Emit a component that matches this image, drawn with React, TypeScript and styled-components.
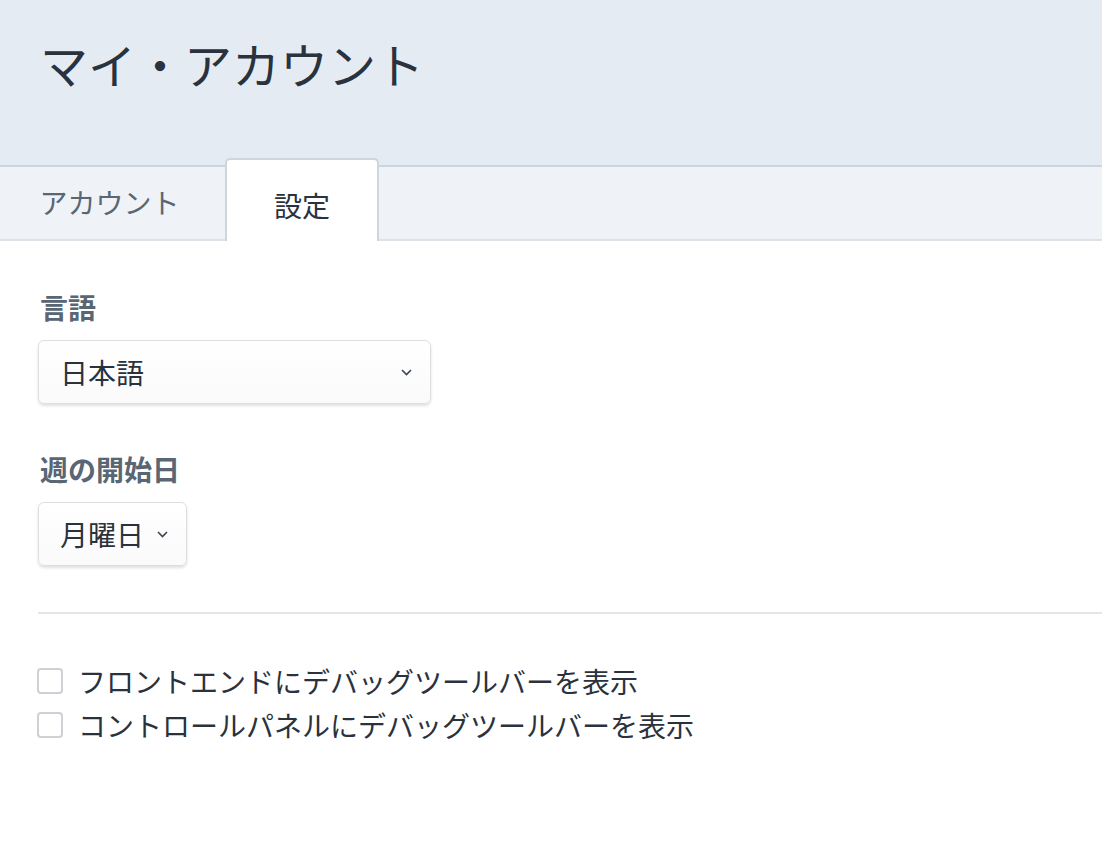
import React from "react";
import styled, { createGlobalStyle } from "styled-components";

const GlobalStyle = createGlobalStyle`
  html, body {
    margin: 0;
    padding: 0;
    background: #ffffff;
  }
  body {
    font-family: "Noto Sans", "Noto Sans CJK JP", sans-serif;
    color: #29323d;
  }
`;

// Page header with title
const Header = styled.header`
  height: 165px;
  box-sizing: border-box;
  background-color: #e4ebf3;
  padding: 30px 0 0 40px;
`;

const Title = styled.h1`
  margin: 0;
  font-size: 48px;
  line-height: 72px;
  font-weight: 400;
  color: #29323d;
`;

// Tab strip under the header
const TabBar = styled.nav`
  display: flex;
  align-items: flex-end;
  height: 76px;
  box-sizing: border-box;
  background-color: #eff3f7;
  border-top: 2px solid #cdd5dd;
  border-bottom: 2px solid #dde2e7;
`;

const Tab = styled.div<{ $active?: boolean; $width: number }>`
  display: flex;
  align-items: center;
  justify-content: center;
  box-sizing: border-box;
  width: ${(p) => p.$width}px;
  font-size: 28px;
  color: ${(p) => (p.$active ? "#29323d" : "#596673")};
  background-color: ${(p) => (p.$active ? "#ffffff" : "transparent")};
  height: ${(p) => (p.$active ? "83px" : "72px")};
  margin-top: ${(p) => (p.$active ? "-9px" : "0")};
  margin-bottom: ${(p) => (p.$active ? "-2px" : "0")};
  padding: ${(p) => (p.$active ? "8px 0 0 0" : "0 6px 2px 0")};
  border: ${(p) => (p.$active ? "2px solid #cdd5dd" : "none")};
  border-bottom: none;
  border-radius: 5px 5px 0 0;
`;

// Settings form
const Content = styled.main`
  padding: 47px 0 0 38px;
`;

const Field = styled.div`
  display: flex;
  flex-direction: column;
  align-items: flex-start;
  margin-bottom: 46px;
`;

const Label = styled.label`
  font-size: 28px;
  line-height: 40px;
  font-weight: 700;
  color: #596673;
  padding-left: 2px;
  margin-bottom: 12px;
`;

const Select = styled.div<{ $width?: number }>`
  display: flex;
  align-items: center;
  justify-content: space-between;
  gap: 13px;
  box-sizing: border-box;
  height: 64px;
  width: ${(p) => (p.$width ? `${p.$width}px` : "auto")};
  padding: 0 18px 0 21px;
  font-size: 28px;
  color: #29323d;
  background: linear-gradient(#ffffff, #fafafa);
  border: 1px solid #dcdfe2;
  border-radius: 6px;
  box-shadow: 0 2px 3px rgba(0, 0, 0, 0.12);
`;

const Chevron = () => (
  <svg width="11" height="7" viewBox="0 0 11 7" fill="none">
    <path d="M1 1l4.5 4.5L10 1" stroke="#3a4350" strokeWidth="1.6" />
  </svg>
);

const Divider = styled.hr`
  border: none;
  height: 2px;
  background-color: #e3e5e8;
  margin: 2px 0 45px 0;
`;

const CheckRow = styled.label`
  display: flex;
  align-items: center;
  gap: 15px;
  height: 44px;
  font-size: 28px;
  color: #29323d;
`;

const Box = styled.span`
  display: block;
  width: 26px;
  height: 26px;
  box-sizing: border-box;
  border: 2px solid #cdd0d4;
  border-radius: 4px;
  background: #ffffff;
  margin-left: -1px;
`;

const App: React.FC = () => {
  return (
    <>
      <GlobalStyle />
      <Header>
        <Title>マイ・アカウント</Title>
      </Header>
      <TabBar>
        <Tab $width={225}>アカウント</Tab>
        <Tab $width={154} $active>
          設定
        </Tab>
      </TabBar>
      <Content>
        <Field>
          <Label>言語</Label>
          <Select $width={393}>
            <span>日本語</span>
            <Chevron />
          </Select>
        </Field>
        <Field>
          <Label>週の開始日</Label>
          <Select>
            <span>月曜日</span>
            <Chevron />
          </Select>
        </Field>
        <Divider />
        <CheckRow>
          <Box />
          フロントエンドにデバッグツールバーを表示
        </CheckRow>
        <CheckRow>
          <Box />
          コントロールパネルにデバッグツールバーを表示
        </CheckRow>
      </Content>
    </>
  );
};

export default App;
